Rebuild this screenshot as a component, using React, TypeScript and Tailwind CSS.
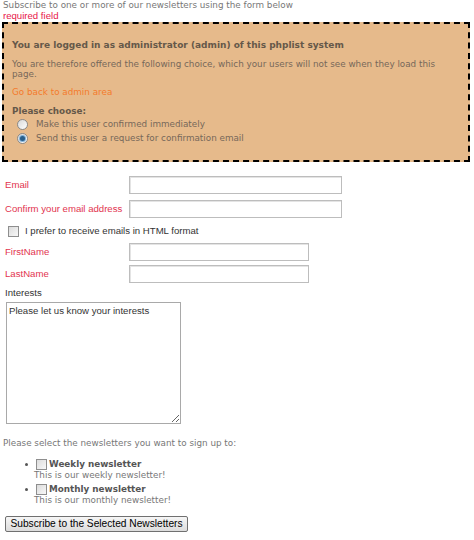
import React from "react";

const V = "font-['DejaVu_Sans',Verdana,sans-serif]";
const A = "font-['Liberation_Sans',Arial,sans-serif]";

function Radio({ checked }: { checked?: boolean }) {
  return (
    <span className="relative inline-block w-[11px] h-[11px] rounded-full border border-[#8a8a8a] bg-gradient-to-br from-[#d8d8d8] to-[#ffffff] shrink-0">
      {checked && (
        <span className="absolute left-[2px] top-[2px] w-[5px] h-[5px] rounded-full bg-[#2a5f8a] shadow-[0_0_0_1px_#7fb0d8]" />
      )}
    </span>
  );
}

function Check() {
  return (
    <span className="inline-block w-[11px] h-[11px] border border-[#8e8e8e] bg-gradient-to-br from-[#dcdcdc] to-[#f8f8f8] shrink-0" />
  );
}

function Field({ label, w, red = true }: { label: string; w: string; red?: boolean }) {
  return (
    <div className="flex items-center h-[18px]">
      <div className={`w-[124px] text-[9.6px] ${red ? "text-[#e2344f]" : "text-[#333]"}`}>{label}</div>
      <div className={`${w} h-[18px] border border-[#bdbdbd] shadow-[inset_1px_1px_0_#e4e4e4] bg-white`} />
    </div>
  );
}

export default function App() {
  return (
    <div className="w-[474px] h-[540px] bg-white overflow-hidden relative">
      <div className={`${V} text-[8.8px] leading-[11px] text-[#777] pl-[3px] pt-[0px]`}>
        Subscribe to one or more of our newsletters using the form below
      </div>
      <div className={`${A} text-[9.6px] leading-[10px] text-[#e8164a] pl-[3px]`}>required field</div>

      <div className={`${V} mt-[1px] ml-[2px] w-[468px] h-[140px] border-2 border-dashed border-black bg-[#e6ba8b] pl-[8px] pr-[8px] pt-[16px] text-[8.8px] leading-[10px] text-[#76685a]`}>
        <div className="font-bold text-[9px] text-[#655849] leading-[11px]">
          You are logged in as administrator (admin) of this phplist system
        </div>
        <div className="mt-[8px]">
          You are therefore offered the following choice, which your users will not see when they load this page.
        </div>
        <div className="mt-[8px] text-[#f47a2c]">Go back to admin area</div>
        <div className="mt-[9px] font-bold text-[#655849]">Please choose:</div>
        <div className="flex items-center h-[14px] mt-[1px] pl-[5px] gap-[8px]">
          <Radio />
          <span>Make this user confirmed immediately</span>
        </div>
        <div className="flex items-center h-[14px] pl-[5px] gap-[8px]">
          <Radio checked />
          <span>Send this user a request for confirmation email</span>
        </div>
      </div>

      <div className={`${A} pl-[5px] mt-[14px] flex flex-col`}>
        <Field label="Email" w="w-[213px]" />
        <div className="h-[6px]" />
        <Field label="Confirm your email address" w="w-[213px]" />
        <div className="flex items-center h-[22px] mt-[2px] pl-[3px] gap-[6px] text-[9.6px] text-[#333]">
          <Check />
          <span>I prefer to receive emails in HTML format</span>
        </div>
        <div className="h-[1px]" />
        <Field label="FirstName" w="w-[180px]" />
        <div className="h-[4px]" />
        <Field label="LastName" w="w-[180px]" />
        <div className="text-[9.6px] text-[#333] leading-[12px] mt-[4px]">Interests</div>
        <textarea
          readOnly
          defaultValue="Please let us know your interests"
          className={`${A} block mt-[3px] ml-[1px] w-[175px] h-[122px] border border-[#a9a9a9] text-[9.6px] leading-[11px] text-[#333] px-[2px] py-[2px] outline-none`}
        />
      </div>

      <div className={`${V} text-[8.8px] leading-[11px] text-[#777] pl-[3px] mt-[14px]`}>
        Please select the newsletters you want to sign up to:
      </div>
      <ul className={`${V} text-[8.8px] leading-[11px] text-[#777] mt-[10px] pl-[34px]`}>
        <li className="relative">
          <span className="absolute left-[-9px] top-[4px] w-[3px] h-[3px] rounded-full bg-[#555]" />
          <div className="flex items-center gap-[2px] ml-[2px] h-[11px]">
            <Check />
            <span className="font-bold text-[#555]">Weekly newsletter</span>
          </div>
          <div>This is our weekly newsletter!</div>
        </li>
        <li className="relative mt-[3px]">
          <span className="absolute left-[-9px] top-[4px] w-[3px] h-[3px] rounded-full bg-[#555]" />
          <div className="flex items-center gap-[2px] ml-[2px] h-[11px]">
            <Check />
            <span className="font-bold text-[#555]">Monthly newsletter</span>
          </div>
          <div>This is our monthly newsletter!</div>
        </li>
      </ul>

      <div className="flex pl-[5px] mt-[10px]">
        <button
          className={`${A} h-[16px] w-[183px] border border-[#707070] rounded-[2px] bg-gradient-to-b from-[#f6f6f6] to-[#dcdcdc] text-[10.2px] leading-[14px] text-black p-0`}
        >
          Subscribe to the Selected Newsletters
        </button>
      </div>
    </div>
  );
}
